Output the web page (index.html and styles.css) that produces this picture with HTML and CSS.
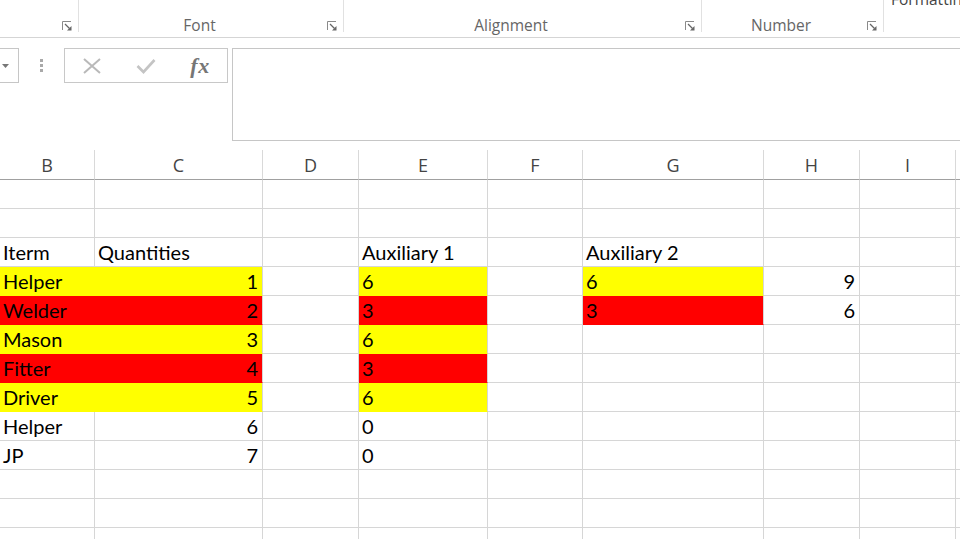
FILE: index.html
```html
<!DOCTYPE html>
<html>
<head>
<meta charset="utf-8">
<link rel="stylesheet" href="styles.css">
</head>
<body>
<div class="ribbon">
  <div class="grp g0"><span class="lbl"></span><svg class="launch" width="10" height="10" viewBox="0 0 10 10"><path d="M0.5 9V0.5H9" fill="none" stroke="#8a8a8a"/><path d="M3 3L7.5 7.5" stroke="#666" stroke-width="1.2"/><path d="M9.5 5V9.5H5Z" fill="#666"/></svg></div>
  <div class="grp g1"><span class="lbl">Font</span><svg class="launch" width="10" height="10" viewBox="0 0 10 10"><path d="M0.5 9V0.5H9" fill="none" stroke="#8a8a8a"/><path d="M3 3L7.5 7.5" stroke="#666" stroke-width="1.2"/><path d="M9.5 5V9.5H5Z" fill="#666"/></svg></div>
  <div class="grp g2"><span class="lbl">Alignment</span><svg class="launch" width="10" height="10" viewBox="0 0 10 10"><path d="M0.5 9V0.5H9" fill="none" stroke="#8a8a8a"/><path d="M3 3L7.5 7.5" stroke="#666" stroke-width="1.2"/><path d="M9.5 5V9.5H5Z" fill="#666"/></svg></div>
  <div class="grp g3"><span class="lbl">Number</span><svg class="launch" width="10" height="10" viewBox="0 0 10 10"><path d="M0.5 9V0.5H9" fill="none" stroke="#8a8a8a"/><path d="M3 3L7.5 7.5" stroke="#666" stroke-width="1.2"/><path d="M9.5 5V9.5H5Z" fill="#666"/></svg></div>
  <div class="grp g4"><span class="cut">Formatting</span></div>
</div>

<div class="fbar">
  <div class="namebox"><svg width="7" height="4" viewBox="0 0 7 4"><path d="M0 0H7L3.5 4Z" fill="#777"/></svg></div>
  <div class="dots"><span></span><span></span><span></span></div>
  <div class="fxbox">
    <div class="fxcell"><svg width="18" height="16" viewBox="0 0 18 16"><path d="M1 1L17 15M17 1L1 15" stroke="#b9b9b9" stroke-width="2"/></svg></div>
    <div class="fxcell"><svg width="20" height="16" viewBox="0 0 20 16"><path d="M1.5 8L7.5 14L18.5 2" fill="none" stroke="#c4c4c4" stroke-width="2.6"/></svg></div>
    <div class="fxcell"><span class="fx">fx</span></div>
  </div>
  <div class="formula"></div>
</div>

<div class="sheet">
  <div class="row hdr"><div>B</div><div>C</div><div>D</div><div>E</div><div>F</div><div>G</div><div>H</div><div>I</div><div></div></div>
  <div class="row"><div></div><div></div><div></div><div></div><div></div><div></div><div></div><div></div><div></div></div>
  <div class="row"><div></div><div></div><div></div><div></div><div></div><div></div><div></div><div></div><div></div></div>
  <div class="row"><div>Iterm</div><div>Quantities</div><div></div><div>Auxiliary 1</div><div></div><div>Auxiliary 2</div><div></div><div></div><div></div></div>
  <div class="row"><div class="y yb">Helper</div><div class="y n">1</div><div></div><div class="y">6</div><div></div><div class="y">6</div><div class="n">9</div><div></div><div></div></div>
  <div class="row"><div class="r rb">Welder</div><div class="r n">2</div><div></div><div class="r">3</div><div></div><div class="r">3</div><div class="n">6</div><div></div><div></div></div>
  <div class="row"><div class="y yb">Mason</div><div class="y n">3</div><div></div><div class="y">6</div><div></div><div></div><div></div><div></div><div></div></div>
  <div class="row"><div class="r rb">Fitter</div><div class="r n">4</div><div></div><div class="r">3</div><div></div><div></div><div></div><div></div><div></div></div>
  <div class="row"><div class="y yb">Driver</div><div class="y n">5</div><div></div><div class="y">6</div><div></div><div></div><div></div><div></div><div></div></div>
  <div class="row"><div>Helper</div><div class="n">6</div><div></div><div>0</div><div></div><div></div><div></div><div></div><div></div></div>
  <div class="row"><div>JP</div><div class="n">7</div><div></div><div>0</div><div></div><div></div><div></div><div></div><div></div></div>
  <div class="row"><div></div><div></div><div></div><div></div><div></div><div></div><div></div><div></div><div></div></div>
  <div class="row"><div></div><div></div><div></div><div></div><div></div><div></div><div></div><div></div><div></div></div>
  <div class="row"><div></div><div></div><div></div><div></div><div></div><div></div><div></div><div></div><div></div></div>
</div>
</body>
</html>
```

FILE: styles.css
```css
html, body {
  margin: 0;
  padding: 0;
  background: #ffffff;
}
body {
  width: 960px;
  height: 539px;
  overflow: hidden;
  font-family: "Open Sans", "Noto Sans", sans-serif;
}

/* ribbon group labels */
.ribbon {
  display: flex;
  height: 37px;
  border-bottom: 1px solid #d5d5d5;
  overflow: hidden;
}
.grp {
  flex: none;
  height: 32px;
  box-sizing: border-box;
  border-right: 1px solid #e1e1e1;
  display: flex;
  align-items: flex-start;
}
.g0 { width: 79px; }
.g1 { width: 265px; }
.g2 { width: 358px; }
.g3 { width: 182px; }
.g4 { flex: 1; border-right: none; }
.lbl {
  flex: 1;
  text-align: center;
  font-size: 15.5px;
  line-height: 20px;
  color: #666666;
  padding-top: 15px;
  white-space: nowrap;
}
.launch {
  flex: none;
  margin: 21px 6px 0 7px;
}
.cut {
  display: block;
  margin-top: -11px;
  padding-left: 7px;
  font-size: 15.5px;
  line-height: 20px;
  color: #444444;
  white-space: nowrap;
}

/* formula bar */
.fbar {
  display: flex;
  align-items: flex-start;
  height: 112px;
  box-sizing: border-box;
  padding-top: 10px;
}
.namebox {
  flex: none;
  width: 29px;
  height: 35px;
  margin-left: -10px;
  box-sizing: border-box;
  border: 1px solid #c6c6c6;
  display: flex;
  align-items: center;
  justify-content: flex-end;
}
.namebox svg { margin-right: 9px; }
.dots {
  flex: none;
  width: 45px;
  box-sizing: border-box;
  padding: 11px 0 0 21px;
  display: flex;
  flex-direction: column;
  gap: 2px;
}
.dots span {
  display: block;
  width: 3px;
  height: 3px;
  background: #a9a9a9;
}
.fxbox {
  flex: none;
  width: 164px;
  height: 35px;
  box-sizing: border-box;
  border: 1px solid #c8c8c8;
  display: flex;
}
.fxcell {
  width: 54px;
  display: flex;
  align-items: center;
  justify-content: center;
}
.fx {
  font-family: "Liberation Serif", "DejaVu Serif", serif;
  font-style: italic;
  font-weight: bold;
  font-size: 22px;
  line-height: 22px;
  color: #767676;
  letter-spacing: 0.5px;
}
.formula {
  flex: 1;
  margin-left: 4px;
  height: 93px;
  box-sizing: border-box;
  border: 1px solid #c6c6c6;
  border-right: none;
}

/* sheet grid */
.sheet {
  font-family: "Lato", "Liberation Sans", sans-serif;
}
.row {
  display: grid;
  grid-template-columns: 95px 168px 96px 129px 95px 181px 96px 96px 1fr;
  height: 29px;
}
.row > div {
  box-sizing: border-box;
  border-right: 1px solid #d6d6d6;
  border-bottom: 1px solid #d6d6d6;
  font-size: 20px;
  line-height: 26px;
  padding: 1px 3px 0 3px;
  color: #000000;
  white-space: nowrap;
  overflow: hidden;
}
.row > div.n {
  text-align: right;
  padding-right: 4px;
}
.hdr {
  height: 30px;
}
.hdr > div {
  font-family: "Open Sans", "Noto Sans", sans-serif;
  font-size: 18px;
  line-height: 27px;
  padding-top: 2px;
  color: #444444;
  text-align: center;
  border-right-color: #d9d9d9;
  border-bottom-color: #a0a0a0;
}
.row > div.y {
  background: #ffff00;
  border-bottom-color: #ffff00;
}
.row > div.r {
  background: #ff0000;
  border-bottom-color: #ff0000;
}
.row > div.yb { border-right-color: #ffff00; }
.row > div.rb { border-right-color: #ff0000; }
```
